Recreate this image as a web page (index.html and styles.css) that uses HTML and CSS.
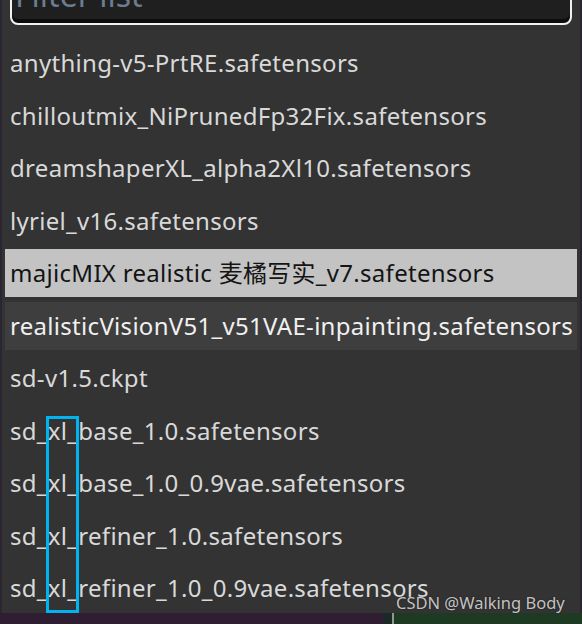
FILE: index.html
```html
<!DOCTYPE html>
<html lang="zh">
<head>
<meta charset="utf-8">
<title>Filter list</title>
<link rel="stylesheet" href="styles.css">
</head>
<body>
<div class="stage">
  <div class="panel">
    <div class="filter"><span class="placeholder">Filter list</span></div>
    <ul class="list">
      <li class="item">anything-v5-PrtRE.safetensors</li>
      <li class="item">chilloutmix_NiPrunedFp32Fix.safetensors</li>
      <li class="item">dreamshaperXL_alpha2Xl10.safetensors</li>
      <li class="item">lyriel_v16.safetensors</li>
      <li class="item selected">majicMIX realistic 麦橘写实_v7.safetensors</li>
      <li class="item hover">realisticVisionV51_v51VAE-inpainting.safetensors</li>
      <li class="item">sd-v1.5.ckpt</li>
      <li class="item">sd_xl_base_1.0.safetensors</li>
      <li class="item">sd_xl_base_1.0_0.9vae.safetensors</li>
      <li class="item">sd_xl_refiner_1.0.safetensors</li>
      <li class="item">sd_xl_refiner_1.0_0.9vae.safetensors</li>
    </ul>
    <div class="mark"></div>
    <div class="watermark">CSDN @Walking Body</div>
  </div>
  <div class="below">
    <div class="below-left"></div>
    <div class="below-mid"></div>
    <div class="below-right"></div>
  </div>
</div>
</body>
</html>
```
FILE: styles.css
```css
html, body {
  margin: 0;
  padding: 0;
}
body {
  background: #2a2530;
  font-family: "Noto Sans", "Noto Sans CJK SC", sans-serif;
  overflow: hidden;
}
.stage {
  width: 582px;
  height: 624px;
  display: flex;
  flex-direction: column;
  overflow: hidden;
}
.panel {
  position: relative;
  height: 613px;
  margin: 0 2px;
  background: #333333;
  display: flex;
  flex-direction: column;
  flex: none;
}
.filter {
  flex: none;
  height: 56px;
  margin: -31px 8px 0 8px;
  box-sizing: border-box;
  border: 2px solid #f2f2f2;
  border-radius: 8px;
  background: #1f1f1f;
  box-shadow: inset 0 -4px 0 #0d0d0d;
  padding: 8px 0 0 3px;
}
.placeholder {
  display: block;
  font-size: 32px;
  line-height: 32px;
  color: #6d7c8f;
}
.list {
  list-style: none;
  margin: 14px 0 0 0;
  padding: 0 3px;
  display: flex;
  flex-direction: column;
  gap: 4.5px;
}
.item {
  height: 48px;
  line-height: 48px;
  padding-left: 5px;
  font-size: 24px;
  letter-spacing: 0.3px;
  color: #d9d9d9;
  white-space: nowrap;
}
.item.selected {
  background: #c3c3c3;
  color: #141414;
}
.item.hover {
  background: #3e3e3e;
  color: #f0f0f0;
}
.mark {
  position: absolute;
  left: 44px;
  top: 416px;
  width: 33px;
  height: 197px;
  box-sizing: border-box;
  border: 3px solid #00b4ef;
}
.watermark {
  position: absolute;
  left: 394px;
  top: 592px;
  font-size: 16.5px;
  line-height: 22px;
  color: rgba(215, 215, 215, 0.9);
  text-shadow: 0 0 2px rgba(0,0,0,0.4);
  white-space: nowrap;
}
.below {
  flex: 1;
  display: flex;
}
.below-left {
  width: 383px;
  background: #2f1e31;
}
.below-mid {
  width: 9px;
  background: #1c2826;
  border-right: 2px solid #8c9a8c;
}
.below-right {
  flex: 1;
  background: #1f3a22;
}
```
